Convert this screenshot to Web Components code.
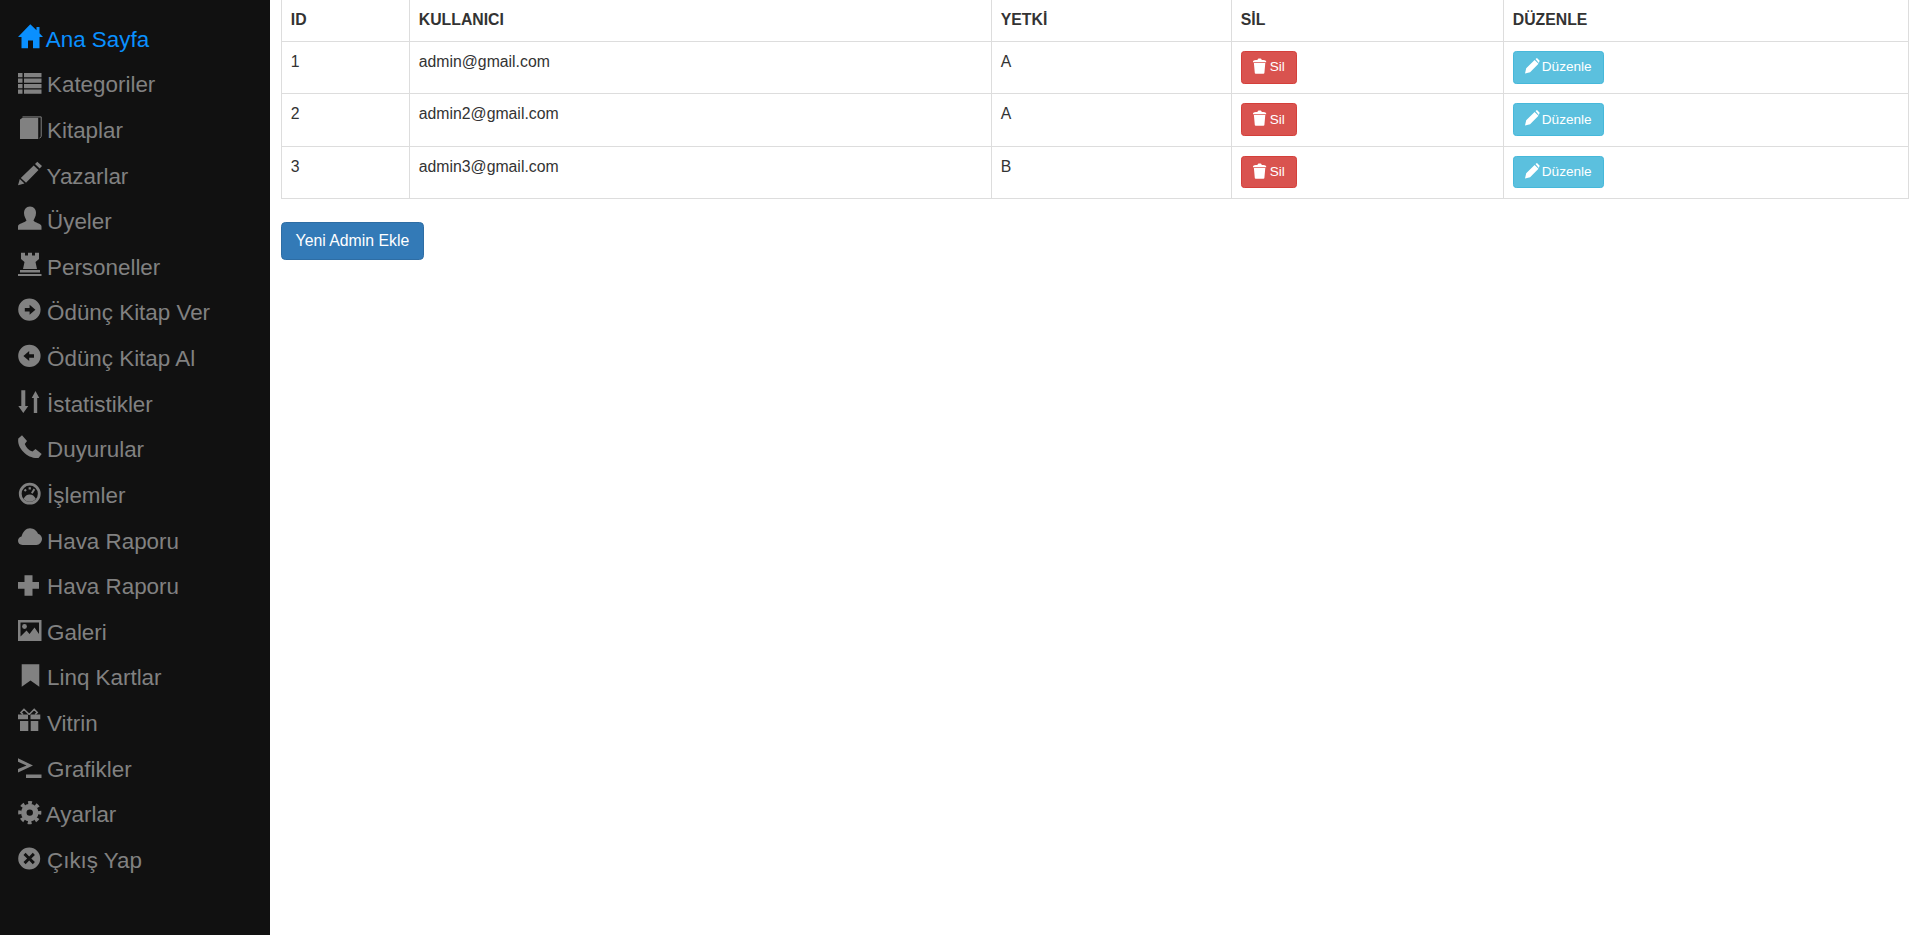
<!DOCTYPE html>
<html lang="tr">
<head>
<meta charset="utf-8">
<title>Admin</title>
<style>
  html, body { margin: 0; height: 100%; background: #fff; overflow: hidden; }
  body { font-family: "Liberation Sans", Arial, sans-serif; }
</style>
</head>
<body>
<admin-page>
  <side-nav slot="nav">
    <nav-item icon="home" active>Ana Sayfa</nav-item>
    <nav-item icon="list">Kategoriler</nav-item>
    <nav-item icon="book">Kitaplar</nav-item>
    <nav-item icon="pencil">Yazarlar</nav-item>
    <nav-item icon="user">Üyeler</nav-item>
    <nav-item icon="tower">Personeller</nav-item>
    <nav-item icon="arrow-right">Ödünç Kitap Ver</nav-item>
    <nav-item icon="arrow-left">Ödünç Kitap Al</nav-item>
    <nav-item icon="sort">İstatistikler</nav-item>
    <nav-item icon="phone">Duyurular</nav-item>
    <nav-item icon="dashboard">İşlemler</nav-item>
    <nav-item icon="cloud">Hava Raporu</nav-item>
    <nav-item icon="plus">Hava Raporu</nav-item>
    <nav-item icon="picture">Galeri</nav-item>
    <nav-item icon="bookmark">Linq Kartlar</nav-item>
    <nav-item icon="gift">Vitrin</nav-item>
    <nav-item icon="terminal">Grafikler</nav-item>
    <nav-item icon="cog">Ayarlar</nav-item>
    <nav-item icon="remove">Çıkış Yap</nav-item>
  </side-nav>
  <admin-table></admin-table>
  <ui-button kind="primary" size="md">Yeni Admin Ekle</ui-button>
</admin-page>

<script>
// glyphs are drawn on a 24 unit box, some go a little over it on purpose
const ICONS = {
  home: '<path d="M12.3-1.7 18.5 4.3V1h3v6.3L25 11h-3.5v11.3H15v-7.8h-5v7.8H3.5V11H0Z"/>',
  list: '<path d="M0 2h4.5v4.3H0ZM6 2h17.5v4.3H6ZM0 7.5h4.5v4.3H0ZM6 7.5h17.5v4.3H6ZM0 13h4.5v4.3H0ZM6 13h17.5v4.3H6ZM0 18.5h4.5v4.3H0ZM6 18.5h17.5v4.3H6Z"/>',
  book: '<path d="M2 2.5 4.5.8h15.7V22H2Z"/><path d="M4.5-.1h18.7v19.4l-1.5 2" fill="none" stroke="currentColor"/>',
  pencil: '<path d="M0 22.3 1.8 16l4.700 4.500ZM2.800 15 15.700 2.500 20.500 7 8 19.800ZM17 1l2.300-2.200 4.700 4.200-2.300 2.500Z"/>',
  // the button pencil is chunkier than the sidebar one
  'pencil-solid': '<path d="M0 24 2 15.500 16 1.500 22.500 8 8.500 22ZM17.500 0l2.500-1.500 4.500 4.500-1.500 3.500Z"/>',
  user: '<path d="M12-1.600c4 0 6 3.100 6 6.600s-2 6-2.500 7.500c1 2.500 8 2.500 8 6v3.200H0v-3.200c0-3.500 7-3.500 8.500-6C8 11 6 8.500 6 5s2-6.600 6-6.600Z"/>',
  tower: '<path d="M3-1.300h4v2.800h3v-2.800h4v2.800h3v-2.800h4V5l-3.500 3L19 15H5l1.500-7L3 5ZM2 16h20v2.500H2ZM0 20h23.500v2H0Z"/>',
  'arrow-right': '<path fill-rule="evenodd" d="M11.400-.6a11.200 11.200 0 1 1 0 22.400a11.200 11.200 0 1 1 0-22.400ZM6.800 9v3.400h4.800v3.300l5.800-5-5.800-5V9Z"/>',
  'arrow-left': '<path fill-rule="evenodd" d="M11.400-.3a11.200 11.200 0 1 1 0 22.400a11.200 11.200 0 1 1 0-22.400ZM16 9.300v3.400h-4.800V16l-5.800-5 5.800-5v3.300Z"/>',
  sort: '<path d="M3.300-.7h4V15h3l-5 7-5-7h3ZM15.800 22V7h-2.100l3.800-7 3.800 7h-2.100v15Z"/>',
  phone: '<path d="M4-.7 9 5 6.800 8c1.200 3.500 4.200 6.500 7.700 7.500l3-2.500 6.200 5-3.200 4c-5.500.5-11.500-2-15-6C1.500 12-.5 7 .3 2.500Z"/>',
  dashboard: '<path fill-rule="evenodd" d="M11.750.8a10.900 10.900 0 1 1 0 21.800a10.900 10.900 0 1 1 0-21.800ZM11.750 3.600a8.100 8.100 0 1 0 0 16.200a8.100 8.100 0 1 0 0-16.200Z"/><path d="M10.600 5.200h2.300v2.200h-2.300ZM5.800 8.200l1.600-1.500 1.400 1.500-1.600 1.500ZM15.600 6.600l1.600 1.100-2.600 4-1.600-.9ZM5.600 16.800c1.400-2.800 3.400-4.300 6.100-4.300s4.700 1.500 6.100 4.300c-1.500 1.800-3.600 2.900-6.100 2.900s-4.600-1.100-6.100-2.900Z"/>',
  cloud: '<path d="M4.500 17C1.500 17 0 15 0 12.800 0 10.500 1.500 9 3.500 8.500 5 3.500 8 .3 12 .3c4 0 7 3 8 5.500 2.500.5 4 3 4 5 0 3-2.500 6.200-5.500 6.200Z"/>',
  plus: '<path d="M6.500 2.200h8v6.800H21v6.800h-6.500v7h-8v-7H0V9h6.500Z"/>',
  picture: '<path fill-rule="evenodd" d="M0 1h23.500v21H0ZM2.500 3.500V17.500l6-6 3 3.500 5-6.500L21 15V3.500Z"/><circle cx="6.500" cy="7.500" r="2.400"/>',
  bookmark: '<path d="M3.700.3h17.600v22.400l-8.800-6.200-8.800 6.200Z"/>',
  gift: '<path d="M0 4.500h10v4.800H0ZM12.500 4.500h9.800v4.800h-9.800ZM2 11h8.300v10H2ZM12.700 11h7.600v10h-7.600Z"/><path d="M11.200 4.500 6-.7 3 2.500 5 4.500M11.200 4.500l5-5.200 3 3.200-2 2" fill="none" stroke="currentColor" stroke-width="1.600"/>',
  terminal: '<path d="M0 2.300 15 9.500 0 16.500V13l8.500-3.500L0 5.800ZM8 18.500h15.500V22H8Z"/>',
  cog: '<circle cx="11.750" cy="11.600" r="6" fill="none" stroke="currentColor" stroke-width="5.600"/><circle cx="11.750" cy="11.600" r="9.900" fill="none" stroke="currentColor" stroke-width="3.400" stroke-dasharray="3.900 3.875" stroke-dashoffset="1.950"/>',
  remove: '<path fill-rule="evenodd" d="M11.200.5a11 11 0 1 1 0 22a11 11 0 1 1 0-22ZM7.600 5.800 5.500 7.900l3.600 3.600-3.600 3.600 2.100 2.100 3.600-3.600 3.600 3.600 2.100-2.100-3.600-3.600 3.600-3.600-2.100-2.100-3.600 3.600Z"/>',
  trash: '<path d="M0 4C0 2 4 1.700 7.500 1.700 7.500 0 9-.7 11-.7s3.500.7 3.500 2.400C18 1.700 22 2 22 4v1.500H0ZM1.500 6.500h19L19 23.500c0 1-1 1.300-2 1.300H5c-1 0-2-.3-2-1.300Z"/>'
};

class UiIcon extends HTMLElement {
  connectedCallback() {
    const root = this.attachShadow({ mode: 'open' });
    root.innerHTML = `
      <style>
        :host { display: inline-block; width: 22px; height: 22px; }
        svg {
          display: block;
          width: 24px;
          height: 24px;
          margin-top: -2px;
          overflow: visible;
          fill: currentColor;
        }
        :host([small]) { width: 13.2px; height: 13.2px; }
        :host([small]) svg { width: 14.4px; height: 14.4px; margin-top: -1.2px; }
      </style>
      <svg viewBox="0 0 24 24">${ICONS[this.getAttribute('name')] || ''}</svg>
    `;
  }
}
customElements.define('ui-icon', UiIcon);

class NavItem extends HTMLElement {
  connectedCallback() {
    const root = this.attachShadow({ mode: 'open' });
    root.innerHTML = `
      <style>
        :host {
          display: block;
          padding: 7.1px 8px 7.1px 17.6px;
          font-size: 22.4px;
          line-height: 31.43px;
          color: #818181;
          white-space: nowrap;
        }
        :host([active]) { color: #0a90ff; }
        ui-icon { vertical-align: -3px; margin-right: 1.2px; }
      </style>
      <ui-icon name="${this.getAttribute('icon')}"></ui-icon> <slot></slot>
    `;
  }
}
customElements.define('nav-item', NavItem);

class SideNav extends HTMLElement {
  constructor() {
    super();
    this.attachShadow({ mode: 'open' }).innerHTML = `
      <style>
        :host {
          display: block;
          box-sizing: border-box;
          height: 100%;
          padding-top: 16.6px;
          background: #111;
        }
      </style>
      <slot></slot>
    `;
  }
}
customElements.define('side-nav', SideNav);

class UiButton extends HTMLElement {
  connectedCallback() {
    const icon = this.getAttribute('icon');
    const root = this.attachShadow({ mode: 'open' });
    root.innerHTML = `
      <style>
        :host {
          display: inline-block;
          box-sizing: border-box;
          border: 1.1px solid;
          border-radius: 3.3px;
          padding: 5.5px 11px;
          font-size: 13.6px;
          line-height: 19.8px;
          color: #fff;
          white-space: nowrap;
        }
        :host([size="md"]) {
          border-radius: 4.4px;
          padding: 6.7px 13.6px;
          font-size: 15.8px;
          line-height: 22px;
        }
        :host([kind="primary"]) { background: #337ab7; border-color: #2e6da4; }
        :host([kind="danger"]) { background: #d9534f; border-color: #d43f3a; }
        :host([kind="info"]) { background: #5bc0de; border-color: #46b8da; }
        ui-icon { vertical-align: -2px; }
      </style>
      ${icon ? `<ui-icon small name="${icon}"></ui-icon> ` : ''}<slot></slot>
    `;
  }
}
customElements.define('ui-button', UiButton);

class AdminTable extends HTMLElement {
  connectedCallback() {
    const users = [
      [1, 'admin@gmail.com', 'A'],
      [2, 'admin2@gmail.com', 'A'],
      [3, 'admin3@gmail.com', 'B']
    ];
    const rows = users.map(([id, mail, role]) => `
      <tr>
        <td>${id}</td>
        <td>${mail}</td>
        <td>${role}</td>
        <td><ui-button kind="danger" icon="trash">Sil</ui-button></td>
        <td><ui-button kind="info" icon="pencil-solid">Düzenle</ui-button></td>
      </tr>`).join('');
    const root = this.attachShadow({ mode: 'open' });
    root.innerHTML = `
      <style>
        :host { display: block; margin-top: -1px; margin-bottom: 23px; }
        table {
          width: 1627px;
          table-layout: fixed;
          border-collapse: collapse;
          font-size: 15.8px;
          line-height: 22px;
          color: #333;
        }
        thead tr { height: 42px; }
        tbody tr { height: 52.4px; }
        th, td {
          padding: 8.8px;
          border: 1px solid #ddd;
          text-align: left;
          vertical-align: top;
        }
        th { font-weight: bold; }
        ui-button { vertical-align: top; }
      </style>
      <table>
        <colgroup>
          <col style="width:128px"><col style="width:582px"><col style="width:240px">
          <col style="width:272px"><col style="width:405px">
        </colgroup>
        <thead>
          <tr><th>ID</th><th>KULLANICI</th><th>YETKİ</th><th>SİL</th><th>DÜZENLE</th></tr>
        </thead>
        <tbody>${rows}</tbody>
      </table>
    `;
  }
}
customElements.define('admin-table', AdminTable);

class AdminPage extends HTMLElement {
  constructor() {
    super();
    this.attachShadow({ mode: 'open' }).innerHTML = `
      <style>
        :host {
          display: grid;
          grid-template-columns: 270px 1fr;
          height: 935px;
          overflow: hidden;
        }
        main { padding: 0 11px; min-width: 0; }
      </style>
      <slot name="nav"></slot>
      <main><slot></slot></main>
    `;
  }
}
customElements.define('admin-page', AdminPage);
</script>
</body>
</html>
